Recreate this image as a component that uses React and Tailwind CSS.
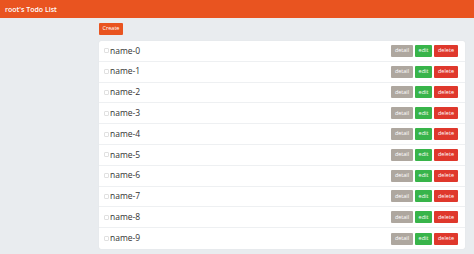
export default function App() {
  const items = Array.from({ length: 10 }, (_, i) => `name-${i}`);
  return (
    <div className="w-[474px] h-[254px] bg-[#e9ecef] overflow-hidden" style={{ fontFamily: '"Open Sans", sans-serif' }}>
      <div className="h-[18px] bg-[#e95420] flex items-center pl-[5px]">
        <span className="text-white text-[7px] font-semibold leading-none">root's Todo List</span>
      </div>
      <div className="pl-[99px] pr-[9px] pt-[5px]">
        <button className="h-[12px] w-[24px] bg-[#e95420] text-white text-[5.5px] rounded-[1px] flex items-center justify-center leading-none">Create</button>
        <div className="mt-[6px] bg-white rounded-[2px] shadow-[0_0_1px_rgba(0,0,0,0.1)]">
          {items.map((n, i) => (
            <div key={n} className={`h-[20.8px] flex items-center pl-[5px] pr-[7px] ${i < 9 ? 'border-b border-[#eef0f2]' : ''}`}>
              <span className="w-[5px] h-[5px] border border-[#e0e0e0] rounded-[1px] mr-[1px]"></span>
              <span className="text-[8.5px] text-[#333] leading-none">{n}</span>
              <div className="ml-auto flex gap-[2px]">
                <button className="h-[12px] w-[22px] bg-[#aea79f] text-white text-[5.5px] rounded-[1px] flex items-center justify-center leading-none">detail</button>
                <button className="h-[12px] w-[17px] bg-[#38b44a] text-white text-[5.5px] rounded-[1px] flex items-center justify-center leading-none">edit</button>
                <button className="h-[12px] w-[24px] bg-[#df382c] text-white text-[5.5px] rounded-[1px] flex items-center justify-center leading-none">delete</button>
              </div>
            </div>
          ))}
        </div>
      </div>
    </div>
  );
}
